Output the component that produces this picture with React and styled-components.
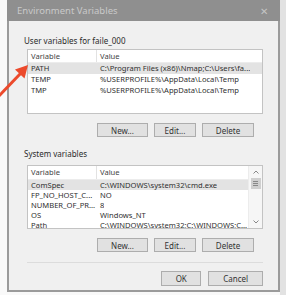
import React from 'react';
import styled, { createGlobalStyle } from 'styled-components';

const GlobalStyle = createGlobalStyle`
	body {
		margin: 0;
		background: #fafafa;
		font-family: "Noto Sans", "Open Sans", sans-serif;
	}
`;

const Page = styled.div`
	position: relative;
	width: 286px;
	height: 295px;
	overflow: hidden;
	background: linear-gradient(to right, #f9f9f9 0, #f9f9f9 280px, #e2e2e2 280px);
`;

const Window = styled.div`
	margin-left: 7px;
	width: 273px;
	height: 292px;
	box-sizing: border-box;
	border: 2px solid #9b9b9b;
	border-top: none;
	background: #f0f0f0;
	display: flex;
	flex-direction: column;
`;

const TitleBar = styled.div`
	height: 21px;
	margin: 0 -2px;
	background: #8f8f8f;
	display: flex;
	align-items: center;
	justify-content: space-between;
	padding: 0 12px 0 10px;
	color: #c9c9c9;
	font-size: 9.5px;
	flex-shrink: 0;
`;

const Close = styled.span`
	font-size: 10px;
	color: #c4c4c4;
`;

const Client = styled.div`
	display: flex;
	flex-direction: column;
	padding: 15px 15px 0 18px;
`;

const GroupLabel = styled.div`
	height: 10px;
	line-height: 10px;
	margin-left: -3px;
	font-size: 8px;
	color: #2a2a2a;
	margin-top: ${p => p.top || 0}px;
`;

const ListBox = styled.div`
	position: relative;
	width: 236px;
	height: ${p => p.height}px;
	box-sizing: border-box;
	border: 1px solid #c3c3c3;
	background: #fff;
	margin-top: ${p => p.top}px;
	overflow: hidden;
`;

const Row = styled.div`
	display: flex;
	height: ${p => p.h}px;
	line-height: ${p => p.h}px;
	font-size: 7.6px;
	color: #303030;
	background: ${p => (p.selected ? '#e3e3e3' : 'transparent')};
	white-space: nowrap;
	margin-right: ${p => (p.scroll ? 14 : 0)}px;
`;

const HeaderRow = styled(Row)`
	border-bottom: 1px solid #ececec;
	color: #444;
`;

const NameCell = styled.div`
	width: 69px;
	padding-left: 3px;
	box-sizing: border-box;
	overflow: hidden;
	flex-shrink: 0;
	border-right: ${p => (p.header ? '1px solid #e2e2e2' : 'none')};
`;

const ValueCell = styled.div`
	padding-left: 3px;
	min-width: 0;
	overflow: hidden;
`;

const ScrollBar = styled.div`
	position: absolute;
	top: 0;
	right: 0;
	bottom: 0;
	width: 13px;
	border-left: 1px solid #ececec;
	background: #f6f6f6;
	display: flex;
	flex-direction: column;
	align-items: center;
`;

const ArrowBox = styled.div`
	height: 12px;
	display: flex;
	align-items: center;
	justify-content: center;
`;

const Thumb = styled.div`
	width: 10px;
	height: 11px;
	background: #cfcfcf;
	display: flex;
	flex-direction: column;
	justify-content: center;
	align-items: center;
	gap: 1px;

	span {
		width: 5px;
		height: 1px;
		background: #888;
	}
`;

const Spacer = styled.div`
	flex: 1;
`;

const ButtonRow = styled.div`
	display: flex;
	gap: ${p => p.gap || 6}px;
	margin-top: ${p => p.top}px;
	margin-left: ${p => p.left}px;
`;

const Button = styled.div`
	width: ${p => p.w}px;
	height: ${p => p.h || 14}px;
	box-sizing: border-box;
	border: 1px solid #adadad;
	background: #e1e1e1;
	font-size: 8px;
	color: #333;
	display: flex;
	align-items: center;
	justify-content: center;
`;

const Separator = styled.div`
	width: 236px;
	height: 1px;
	background: #dcdcdc;
	margin-top: 10px;
`;

const RedArrow = styled.svg`
	position: absolute;
	left: 0;
	top: 0;
`;

const Chevron = ({ up }) => (
	<svg width="6" height="4" viewBox="0 0 6 4">
		<polyline
			points={up ? '0.5,3.5 3,1 5.5,3.5' : '0.5,0.5 3,3 5.5,0.5'}
			fill="none"
			stroke="#7a7a7a"
			strokeWidth="0.9"
		/>
	</svg>
);

const userVars = [
	['PATH', 'C:\\Program Files (x86)\\Nmap;C:\\Users\\fa...'],
	['TEMP', '%USERPROFILE%\\AppData\\Local\\Temp'],
	['TMP', '%USERPROFILE%\\AppData\\Local\\Temp'],
];

const systemVars = [
	['ComSpec', 'C:\\WINDOWS\\system32\\cmd.exe'],
	['FP_NO_HOST_C...', 'NO'],
	['NUMBER_OF_PR...', '8'],
	['OS', 'Windows_NT'],
	['Path', 'C:\\WINDOWS\\system32;C:\\WINDOWS;C...'],
];

const VarList = ({ vars, height, top, headerH, rowH, scroll }) => (
	<ListBox height={height} top={top}>
		<HeaderRow h={headerH} scroll={scroll}>
			<NameCell header>Variable</NameCell>
			<ValueCell>Value</ValueCell>
		</HeaderRow>
		{vars.map(([name, value], i) => (
			<Row key={name} h={rowH} selected={i === 0} scroll={scroll}>
				<NameCell>{name}</NameCell>
				<ValueCell>{value}</ValueCell>
			</Row>
		))}
		{scroll && (
			<ScrollBar>
				<ArrowBox><Chevron up /></ArrowBox>
				<Thumb><span /><span /><span /></Thumb>
				<Spacer />
				<ArrowBox><Chevron /></ArrowBox>
			</ScrollBar>
		)}
	</ListBox>
);

const EditButtons = ({ top }) => (
	<ButtonRow top={top} left={70}>
		<Button w={51}>New...</Button>
		<Button w={42}>Edit...</Button>
		<Button w={52}>Delete</Button>
	</ButtonRow>
);

const App = () => (
	<Page>
		<GlobalStyle />
		<Window>
			<TitleBar>
				<span>Environment Variables</span>
				<Close>✕</Close>
			</TitleBar>
			<Client>
				<GroupLabel>User variables for faile_000</GroupLabel>
				<VarList vars={userVars} height={65} top={3} headerH={12} rowH={11} />
				<EditButtons top={9} />
				<GroupLabel top={12}>System variables</GroupLabel>
				<VarList vars={systemVars} height={64} top={6} headerH={13} rowH={10} scroll />
				<EditButtons top={9} />
				<Separator />
				<ButtonRow top={8} left={134} gap={7}>
					<Button w={43} h={15}>OK</Button>
					<Button w={58} h={15}>Cancel</Button>
				</ButtonRow>
			</Client>
		</Window>
		<RedArrow width="40" height="110" viewBox="0 0 40 110">
			<line x1="-2" y1="97" x2="21" y2="73" stroke="#ec4a2c" strokeWidth="3" />
			<polygon points="28,65 15,69.5 24.5,78.5" fill="#ec4a2c" />
		</RedArrow>
	</Page>
);

export default App;
